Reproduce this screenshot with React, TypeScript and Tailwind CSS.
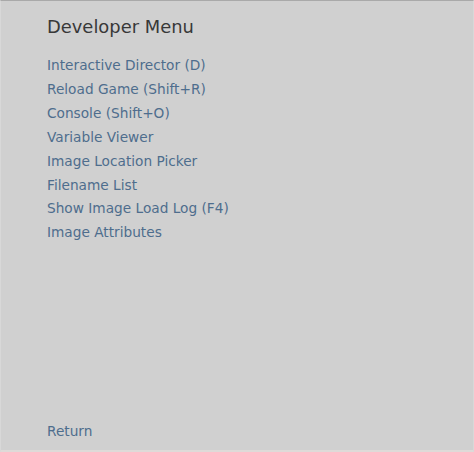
const items = [
  "Interactive Director (D)",
  "Reload Game (Shift+R)",
  "Console (Shift+O)",
  "Variable Viewer",
  "Image Location Picker",
  "Filename List",
  "Show Image Load Log (F4)",
  "Image Attributes",
];

export default function App() {
  return (
    <div className="h-[452px] w-[474px] overflow-hidden bg-[#d0d0d0] border-t border-t-[#a9a9a9] border-x border-x-[#d8d8d8] border-b-2 border-b-[#dedad8] font-['DejaVu_Sans',sans-serif]">
      <div className="flex h-full flex-col pl-[46px]">
        {/* title */}
        <h1 className="mt-[12px] text-[17.9px] leading-[28px] text-[#383838]">
          Developer Menu
        </h1>
        {/* entries */}
        <ul className="mt-[13px] flex flex-col">
          {items.map((item) => (
            <li key={item} className="text-[13.7px] leading-[23.9px] text-[#4e6d8d]">
              {item}
            </li>
          ))}
        </ul>
        <div className="flex-1" />
        <div className="mb-[7px] text-[13.7px] leading-[24px] text-[#4e6d8d]">Return</div>
      </div>
    </div>
  );
}
